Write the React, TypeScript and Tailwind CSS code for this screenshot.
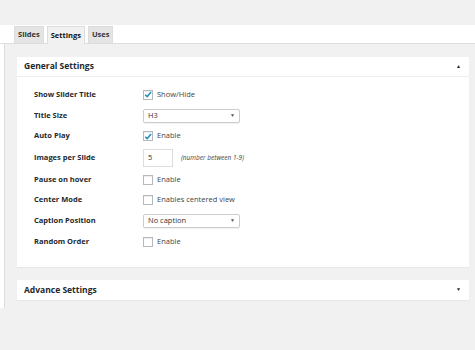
import React from 'react';

const font = { fontFamily: '"Open Sans", "Noto Sans", sans-serif' };

const Check: React.FC<{ checked?: boolean; label: string }> = ({ checked, label }) => (
  <div className="flex items-center gap-[4px]">
    <span className="w-[10px] h-[10px] border border-[#b4b9be] bg-white flex items-center justify-center shadow-[inset_0_1px_1px_rgba(0,0,0,0.08)]">
      {checked && (
        <svg width="9" height="9" viewBox="0 0 10 10">
          <path d="M1.5 5.2 L4 7.6 L8.8 1.8" fill="none" stroke="#1e8cbe" strokeWidth="1.8" />
        </svg>
      )}
    </span>
    <span className="text-[7.5px] text-[#444]">{label}</span>
  </div>
);

const Select: React.FC<{ value: string }> = ({ value }) => (
  <div className="w-[97px] h-[14px] border border-[#ccc] rounded-[2px] bg-white flex items-center justify-between px-[4px] shadow-[0_1px_1px_rgba(0,0,0,0.06)]">
    <span className="text-[7.5px] text-[#333]">{value}</span>
    <span className="text-[5px] text-[#555]">▼</span>
  </div>
);

const Row: React.FC<{ label: string; h: number; children: React.ReactNode }> = ({ label, h, children }) => (
  <div className="flex items-center" style={{ height: h }}>
    <span className="w-[109px] text-[7.5px] font-bold text-[#23282d]">{label}</span>
    {children}
  </div>
);

export default function App() {
  return (
    <div className="w-[475px] h-[350px] bg-[#f1f1f1] overflow-hidden" style={font}>
      <div className="h-[25px]" />
      <div className="h-[19px] bg-white border-b border-[#ddd] flex items-end gap-[3px] pl-[14px]">
        <div className="h-[17px] px-[3px] bg-[#e4e4e4] border border-b-0 border-[#ddd] flex items-center text-[7.5px] font-bold text-[#333]">Slides</div>
        <div className="h-[18px] px-[3px] bg-[#f1f1f1] border border-b-0 border-[#ddd] flex items-center text-[7.5px] font-bold text-[#111] -mb-px">Settings</div>
        <div className="h-[17px] px-[3px] bg-[#e4e4e4] border border-b-0 border-[#ddd] flex items-center text-[7.5px] font-bold text-[#333]">Uses</div>
      </div>
      <div className="flex h-[264px]">
        <div className="w-[5px] bg-white border-r border-[#ddd]" />
        <div className="flex-1 pl-[12px] pr-[6px] pt-[13px]">
          <div className="bg-white shadow-[0_1px_1px_rgba(0,0,0,0.04)]">
            <div className="h-[20px] border-b border-[#eee] flex items-center justify-between pl-[7px] pr-[8px]">
              <span className="text-[8.5px] font-bold text-[#23282d]">General Settings</span>
              <span className="text-[5px] text-[#222]">▲</span>
            </div>
            <div className="pl-[17px] pt-[7px] pb-[15px]">
              <Row label="Show Slider Title" h={21}>
                <Check checked label="Show/Hide" />
              </Row>
              <Row label="Title Size" h={21}>
                <Select value="H3" />
              </Row>
              <Row label="Auto Play" h={20}>
                <Check checked label="Enable" />
              </Row>
              <Row label="Images per Slide" h={24}>
                <div className="w-[30px] h-[18px] border border-[#ddd] bg-white flex items-center px-[4px] text-[7.5px] text-[#333]">5</div>
                <span className="ml-[8px] text-[6.5px] italic text-[#444]">(number between 1-9)</span>
              </Row>
              <Row label="Pause on hover" h={20}>
                <Check label="Enable" />
              </Row>
              <Row label="Center Mode" h={20}>
                <Check label="Enables centered view" />
              </Row>
              <Row label="Caption Position" h={21}>
                <Select value="No caption" />
              </Row>
              <Row label="Random Order" h={21}>
                <Check label="Enable" />
              </Row>
            </div>
          </div>
          <div className="mt-[13px] h-[20px] bg-white flex items-center justify-between pl-[7px] pr-[8px] shadow-[0_1px_1px_rgba(0,0,0,0.04)]">
            <span className="text-[8.5px] font-bold text-[#23282d]">Advance Settings</span>
            <span className="text-[5px] text-[#222]">▼</span>
          </div>
        </div>
      </div>
    </div>
  );
}
